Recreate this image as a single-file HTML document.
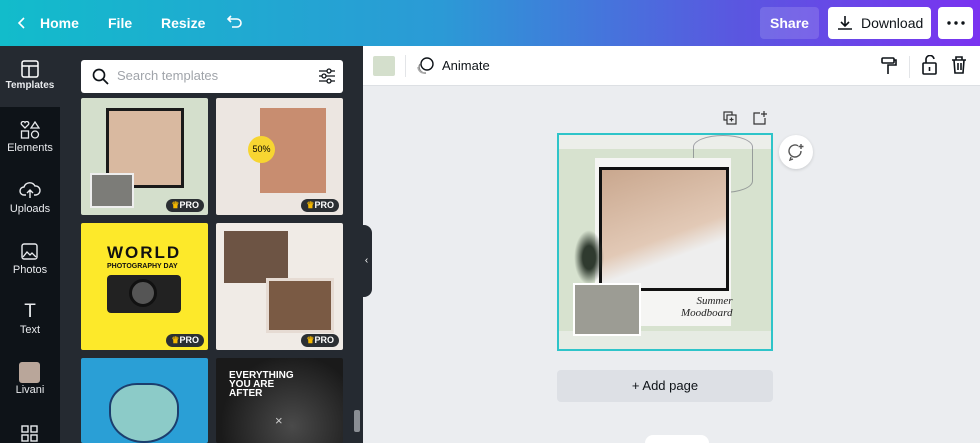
<!DOCTYPE html><html><head><style>
*{margin:0;padding:0;box-sizing:border-box}
html,body{width:980px;height:443px;overflow:hidden}
body{font-family:"Liberation Sans",sans-serif;position:relative;background:#ebedf0}
.a{position:absolute}
.top{left:0;top:0;width:980px;height:46px;background:linear-gradient(90deg,#12bccb 0%,#2b9ad6 45%,#5a57e0 75%,#7a33f0 100%)}
.tl{color:#fff;font-weight:bold;font-size:14px;top:15px}
.side{left:0;top:46px;width:60px;height:397px;background:#0e1318}
.panel{left:60px;top:46px;width:303px;height:397px;background:#252a31}
.si{width:60px;text-align:center;color:#e8eaed;font-size:11px}
.th{border-radius:2px;overflow:hidden}
.pro{background:#2b2f33;color:#fff;font-size:9px;font-weight:bold;border-radius:8px;padding:1px 5px;right:4px;bottom:3px}
.pro b{color:#f5b800}
</style></head><body>
<div class="a top"></div>
<svg class="a" style="left:17px;top:16px" width="10" height="14"><path d="M7 2L2 7l5 5" fill="none" stroke="#fff" stroke-width="1.6"/></svg>
<div class="a tl" style="left:40px">Home</div>
<div class="a tl" style="left:108px">File</div>
<div class="a tl" style="left:161px">Resize</div>
<svg class="a" style="left:226px;top:14px" width="18" height="16" viewBox="0 0 18 16"><path d="M5 2L2 5l3 3M2 5h9a4 4 0 010 8H6" fill="none" stroke="#fff" stroke-width="1.6"/></svg>
<div class="a" style="left:760px;top:7px;width:59px;height:32px;background:rgba(255,255,255,.14);border-radius:4px;color:#fff;font-weight:bold;font-size:14px;text-align:center;line-height:32px">Share</div>
<div class="a" style="left:828px;top:7px;width:103px;height:32px;background:#fff;border-radius:4px;font-size:14px;color:#0e1318;line-height:32px;padding-left:33px">Download</div>
<svg class="a" style="left:836px;top:14px" width="18" height="18" viewBox="0 0 18 18"><path d="M9 2v10M5 8l4 4 4-4M2 15h14" fill="none" stroke="#0e1318" stroke-width="1.6"/></svg>
<div class="a" style="left:938px;top:7px;width:35px;height:32px;background:#fff;border-radius:4px"></div>
<svg class="a" style="left:946px;top:21px" width="20" height="4"><circle cx="3" cy="2" r="1.7" fill="#0e1318"/><circle cx="10" cy="2" r="1.7" fill="#0e1318"/><circle cx="17" cy="2" r="1.7" fill="#0e1318"/></svg>

<div class="a side"></div>
<div class="a" style="left:0;top:46px;width:60px;height:61px;background:#252a31"></div>
<div class="a panel"></div>
<svg class="a" style="left:21px;top:60px" width="18" height="18"><rect x="1" y="1" width="16" height="16" rx="2" fill="none" stroke="#fff" stroke-width="1.5"/><path d="M1 6h16M8 6v11" stroke="#fff" stroke-width="1.5"/></svg>
<div class="a si" style="top:80px;font-weight:bold;font-size:10px">Templates</div>
<svg class="a" style="left:20px;top:121px" width="20" height="18" fill="none" stroke="#e8eaed" stroke-width="1.3"><path d="M5 7L1.5 3.5a2 2 0 013.5-2 2 2 0 013.5 2z"/><path d="M15 1l4 6h-8z"/><rect x="1.5" y="10" width="7" height="7"/><circle cx="15" cy="13.5" r="3.5"/></svg>
<div class="a si" style="top:142px">Elements</div>
<svg class="a" style="left:19px;top:181px" width="22" height="18" fill="none" stroke="#e8eaed" stroke-width="1.4"><path d="M7 14H5a4 4 0 010-8 6 6 0 0111-1 4.5 4.5 0 011 9h-2M11 17V9M8 12l3-3 3 3"/></svg>
<div class="a si" style="top:203px">Uploads</div>
<svg class="a" style="left:21px;top:243px" width="17" height="17"><rect x="1" y="1" width="15" height="15" rx="2" fill="none" stroke="#e8eaed" stroke-width="1.4"/><path d="M2 14l4-5 3 3 2-2 4 4" fill="none" stroke="#e8eaed" stroke-width="1.3"/></svg>
<div class="a si" style="top:264px">Photos</div>
<div class="a si" style="top:301px;font-size:19px">T</div>
<div class="a si" style="top:324px">Text</div>
<div class="a" style="left:19px;top:362px;width:21px;height:21px;border-radius:3px;background:#b9a69a"></div>
<div class="a si" style="top:384px">Livani</div>
<svg class="a" style="left:21px;top:425px" width="17" height="17"><g fill="none" stroke="#e8eaed" stroke-width="1.4"><rect x="1" y="1" width="6" height="6"/><rect x="10" y="1" width="6" height="6"/><rect x="1" y="10" width="6" height="6"/><rect x="10" y="10" width="6" height="6"/></g></svg>

<div class="a" style="left:81px;top:60px;width:262px;height:33px;background:#fff;border-radius:3px"></div>
<svg class="a" style="left:92px;top:68px" width="18" height="18"><circle cx="7" cy="7" r="5.5" fill="none" stroke="#0e1318" stroke-width="1.7"/><path d="M11 11l5 5" stroke="#0e1318" stroke-width="1.8"/></svg>
<div class="a" style="left:117px;top:68px;color:#a0a4aa;font-size:13px">Search templates</div>
<svg class="a" style="left:318px;top:67px" width="18" height="18" fill="none" stroke="#0e1318" stroke-width="1.3"><path d="M1 4h16M1 9h16M1 14h16"/><circle cx="11" cy="4" r="2" fill="#fff"/><circle cx="6" cy="9" r="2" fill="#fff"/><circle cx="11" cy="14" r="2" fill="#fff"/></svg>

<div class="a th" style="left:81px;top:98px;width:127px;height:117px;background:#d4dfcc">
 <div class="a" style="left:25px;top:10px;width:78px;height:80px;background:#1a1a1a"></div>
 <div class="a" style="left:28px;top:13px;width:72px;height:74px;background:#d9b9a0"></div>
 <div class="a" style="left:9px;top:75px;width:44px;height:35px;background:#7c7c78;border:2px solid #eee"></div>
 <div class="a pro"><b>♛</b>PRO</div></div>
<div class="a th" style="left:216px;top:98px;width:127px;height:117px;background:#ece6e1">
 <div class="a" style="left:44px;top:10px;width:66px;height:85px;background:#c88d70"></div>
 <div class="a" style="left:32px;top:38px;width:27px;height:27px;border-radius:50%;background:#f7d531;font-size:9px;text-align:center;line-height:27px">50%</div>
 <div class="a pro"><b>♛</b>PRO</div></div>
<div class="a th" style="left:81px;top:223px;width:127px;height:127px;background:#fde92a">
 <div class="a" style="left:26px;top:20px;font-weight:900;font-size:17px;letter-spacing:2px;color:#111">WORLD</div>
 <div class="a" style="left:26px;top:40px;font-size:7px;font-weight:bold;color:#111">PHOTOGRAPHY DAY</div>
 <div class="a" style="left:26px;top:52px;width:74px;height:38px;background:#222;border-radius:4px"></div>
 <div class="a" style="left:48px;top:56px;width:28px;height:28px;border-radius:50%;background:#555;border:3px solid #111"></div>
 <div class="a pro"><b>♛</b>PRO</div></div>
<div class="a th" style="left:216px;top:223px;width:127px;height:127px;background:#f0ebe6">
 <div class="a" style="left:8px;top:8px;width:64px;height:52px;background:#6d5444"></div>
 <div class="a" style="left:50px;top:55px;width:68px;height:55px;background:#7a5a44;border:3px solid #e6dbd3"></div>
 <div class="a pro"><b>♛</b>PRO</div></div>
<div class="a th" style="left:81px;top:358px;width:127px;height:85px;background:#2a9fd6">
 <div class="a" style="left:28px;top:25px;width:70px;height:60px;border-radius:40% 40% 50% 50%;background:#8ccbc8;border:2px solid #1b3e6e"></div></div>
<div class="a th" style="left:216px;top:358px;width:127px;height:85px;background:radial-gradient(circle at 60% 80%,#4a4a4a,#1a1a1a 70%)">
 <div class="a" style="left:13px;top:13px;color:#fff;font-weight:900;font-size:10px;line-height:9px">EVERYTHING<br>YOU ARE<br>AFTER</div>
 <div class="a" style="left:59px;top:55px;color:#ccc;font-size:13px">×</div></div>
<div class="a" style="left:354px;top:410px;width:6px;height:22px;background:#8a8e94;border-radius:2px"></div>
<div class="a" style="left:361px;top:225px;width:11px;height:72px;background:#252a31;border-radius:0 8px 8px 0;color:#fff;font-size:10px;line-height:72px;text-align:center">‹</div>

<div class="a" style="left:363px;top:46px;width:617px;height:40px;background:#fff;border-bottom:1px solid #dde0e4"></div>
<div class="a" style="left:373px;top:56px;width:22px;height:20px;background:#d4dfcc;border-radius:2px"></div>
<div class="a" style="left:405px;top:55px;width:1px;height:22px;background:#e3e5e8"></div>
<svg class="a" style="left:416px;top:56px" width="20" height="20" fill="none" stroke="#0e1318" stroke-width="1.4"><circle cx="11" cy="8" r="6"/><path d="M4 8a6 6 0 006 9" stroke="#888"/><path d="M2 11a6 6 0 006 6" stroke="#aaa"/></svg>
<div class="a" style="left:442px;top:58px;font-size:13px;color:#0e1318">Animate</div>
<svg class="a" style="left:880px;top:56px" width="18" height="20" fill="none" stroke="#0e1318" stroke-width="1.6"><rect x="2" y="2" width="12" height="5" rx="1"/><path d="M14 4h2v5H8v3M8 12v6"/></svg>
<div class="a" style="left:909px;top:56px;width:1px;height:22px;background:#e3e5e8"></div>
<svg class="a" style="left:921px;top:55px" width="18" height="20" fill="none" stroke="#0e1318" stroke-width="1.6"><rect x="2" y="8" width="13" height="11" rx="1"/><path d="M5 8V5a4 4 0 018-1"/><path d="M8.5 16v-4"/></svg>
<svg class="a" style="left:950px;top:55px" width="18" height="20" fill="none" stroke="#0e1318" stroke-width="1.6"><path d="M2 5h14M6 5V2h6v3M4 5l1 13h8l1-13M8 8v7M11 8v7"/></svg>

<svg class="a" style="left:723px;top:111px" width="14" height="14" fill="none" stroke="#333" stroke-width="1.2"><rect x="1" y="1" width="8" height="8"/><rect x="4" y="4" width="9" height="9" fill="#ebedf0"/><path d="M8.5 6.5v4M6.5 8.5h4"/></svg>
<svg class="a" style="left:753px;top:110px" width="15" height="15" fill="none" stroke="#333" stroke-width="1.2"><path d="M7 3H1v11h11V8M11 1v6M8 4h6"/></svg>
<div class="a" style="left:557px;top:133px;width:216px;height:218px;border:2px solid #2ec4c9;background:#d7e2cf;overflow:hidden">
 <div class="a" style="left:0;top:0;width:212px;height:14px;background:#eceeea"></div>
 <div class="a" style="left:0;top:196px;width:212px;height:20px;background:#e6ebe3"></div>
 <div class="a" style="left:134px;top:0;width:60px;height:58px;border:1px solid #556;border-radius:50%/12px;opacity:.5"></div>
 <div class="a" style="left:36px;top:23px;width:136px;height:168px;background:#f5f5f3"></div>
 <div class="a" style="left:40px;top:32px;width:130px;height:124px;background:#111"></div>
 <div class="a" style="left:43px;top:35px;width:124px;height:118px;background:linear-gradient(160deg,#c9a78e,#e2c9b6 55%,#eeeeee 70%)"></div>
 <div class="a" style="left:122px;top:160px;font-family:'Liberation Serif',serif;font-size:11px;line-height:12px;text-align:right;font-style:italic;color:#222">Summer<br>Moodboard</div>
 <div class="a" style="left:15px;top:95px;width:30px;height:55px;background:radial-gradient(ellipse,#2f3a2f 30%,transparent 70%)"></div>
 <div class="a" style="left:14px;top:148px;width:68px;height:53px;background:#9c9c94;border:2px solid #fff"></div>
</div>
<div class="a" style="left:779px;top:135px;width:34px;height:34px;border-radius:50%;background:#fff;box-shadow:0 1px 3px rgba(0,0,0,.15)"></div>
<svg class="a" style="left:786px;top:142px" width="20" height="20" fill="none" stroke="#555" stroke-width="1.4"><path d="M15 9a6 6 0 11-3-5.2M5 15l-1 3 3-1M15 2v5M12.5 4.5h5"/></svg>
<div class="a" style="left:557px;top:370px;width:216px;height:32px;background:#dde0e5;border-radius:4px;text-align:center;line-height:32px;font-size:13px;color:#0e1318">+ Add page</div>
<div class="a" style="left:645px;top:435px;width:64px;height:8px;border-radius:8px 8px 0 0;background:#fff"></div>
</body></html>
